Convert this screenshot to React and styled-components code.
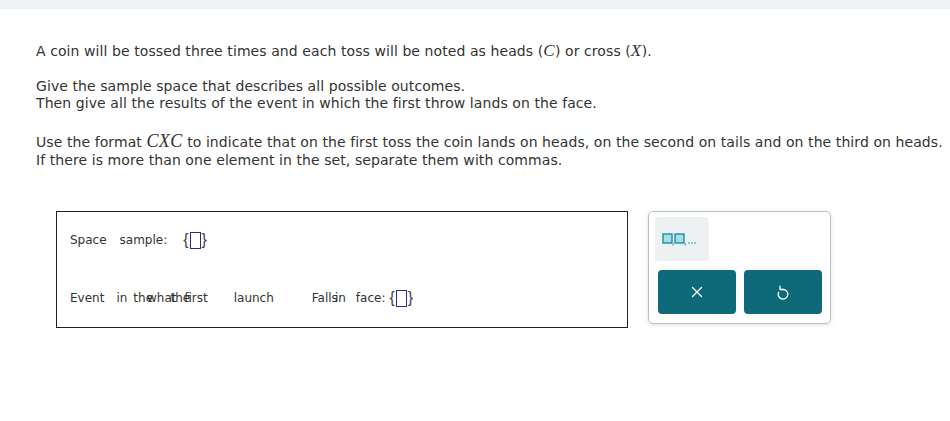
import React from "react";
import styled, { createGlobalStyle } from "styled-components";

const Global = createGlobalStyle`
  body {
    margin: 0;
    background: #fff;
    font-family: "DejaVu Sans", Verdana, sans-serif;
    color: #333;
  }
`;

const TopStrip = styled.div`
  height: 9px;
  background: #eef2f4;
`;

const Content = styled.div`
  padding: 33px 0 0 36px;
`;

const Para = styled.p`
  margin: 0 0 ${(p) => p.$mb || 0}px;
  font-size: 14px;
  letter-spacing: 0.08px;
  line-height: ${(p) => p.$lh || 17}px;
  white-space: nowrap;
`;

const M = styled.span`
  font-family: "Liberation Serif", "Times New Roman", serif;
  font-style: italic;
  font-size: ${(p) => p.$size || 17}px;
  letter-spacing: 0.4px;
`;

const Row = styled.div`
  display: flex;
  align-items: flex-start;
  margin: 42px 0 0 20px;
`;

const AnswerBox = styled.div`
  width: 572px;
  height: 117px;
  border: 1px solid #222;
  padding: 18px 0 0 13px;
  box-sizing: border-box;
  display: flex;
  flex-direction: column;
  gap: 38px;
`;

const Line = styled.div`
  display: flex;
  align-items: center;
  font-size: 12px;
  height: 20px;
  color: #333;
  white-space: nowrap;
`;

const Word = styled.span`
  margin-left: ${(p) => p.$ml || 0}px;
`;

const Brace = styled.span`
  display: inline-flex;
  align-items: center;
  margin-left: ${(p) => p.$ml || 0}px;
  font-family: "Liberation Sans", Arial, sans-serif;
  font-size: 16px;
  color: #444;
`;

const Slot = styled.span`
  display: inline-block;
  width: 9px;
  height: 15px;
  border: 1px solid #2a2a8a;
  margin: 0 1px;
`;

const Panel = styled.div`
  margin-left: 20px;
  width: 183px;
  height: 113px;
  border: 1px solid #b9c0c4;
  border-radius: 5px;
  box-sizing: border-box;
  box-shadow: 0 1px 4px rgba(0, 0, 0, 0.12);
  padding: 5px 6px 0 6px;
`;

const Template = styled.div`
  width: 54px;
  height: 44px;
  background: #eef1f2;
  border-radius: 4px;
  display: flex;
  align-items: center;
  justify-content: center;
`;

const Buttons = styled.div`
  display: flex;
  gap: 8px;
  margin: 9px 0 0 3px;
`;

const ToolButton = styled.button`
  width: 78px;
  height: 44px;
  border: none;
  border-radius: 4px;
  background: #0e6a79;
  color: #fff;
  display: flex;
  align-items: center;
  justify-content: center;
  padding: 0;
`;

const TemplateIcon = () => (
  <svg width="40" height="14" viewBox="0 0 40 14">
    <rect x="1" y="2" width="9" height="9" fill="#a8dde6" stroke="#1d8ea3" strokeWidth="1.4" />
    <path d="M11.5 11.5 L11 13.5" stroke="#1d8ea3" strokeWidth="1" />
    <rect x="13" y="2" width="9" height="9" fill="#a8dde6" stroke="#1d8ea3" strokeWidth="1.4" />
    <path d="M23.5 11.5 L23 13.5" stroke="#1d8ea3" strokeWidth="1" />
    <circle cx="27" cy="11" r="0.8" fill="#1d8ea3" />
    <circle cx="30" cy="11" r="0.8" fill="#1d8ea3" />
    <circle cx="33" cy="11" r="0.8" fill="#1d8ea3" />
  </svg>
);

const XIcon = () => (
  <svg width="12" height="12" viewBox="0 0 12 12">
    <path d="M1.5 1.5 L10.5 10.5 M10.5 1.5 L1.5 10.5" stroke="#fff" strokeWidth="1.4" strokeLinecap="round" />
  </svg>
);

const UndoIcon = () => (
  <svg width="12" height="15" viewBox="0 0 12 15">
    <path
      d="M6 4.5 A4.8 4.8 0 1 1 1.6 7.4"
      fill="none"
      stroke="#fff"
      strokeWidth="1.3"
      strokeLinecap="round"
    />
    <path d="M3 1.2 L3 4.5 L6.4 4.5" fill="none" stroke="#fff" strokeWidth="1.3" strokeLinecap="round" strokeLinejoin="round" />
  </svg>
);

export default function App() {
  return (
    <>
      <Global />
      <TopStrip />
      <Content>
        <Para $mb={18}>
          A coin will be tossed three times and each toss will be noted as heads (<M>C</M>) or cross (<M>X</M>).
        </Para>
        <Para>Give the sample space that describes all possible outcomes.</Para>
        <Para $mb={20}>Then give all the results of the event in which the first throw lands on the face.</Para>
        <Para $lh={19}>
          Use the format <M $size={18}>CXC</M> to indicate that on the first toss the coin lands on heads, on the second on tails and on the third on heads.
        </Para>
        <Para>If there is more than one element in the set, separate them with commas.</Para>
        <Row>
          <AnswerBox>
            <Line>
              <Word>Space</Word>
              <Word $ml={13}>sample:</Word>
              <Brace $ml={16}>{"{"}<Slot />{"}"}</Brace>
            </Line>
            <Line>
              <Word>Event</Word>
              <Word $ml={12}>in</Word>
              <Word $ml={6}>the</Word>
              <Word $ml={-6}>what</Word>
              <Word $ml={-6}>the</Word>
              <Word $ml={-6}>first</Word>
              <Word $ml={26}>launch</Word>
              <Word $ml={38}>Falls</Word>
              <Word $ml={-3}>in</Word>
              <Word $ml={10}>face:</Word>
              <Brace $ml={4}>{"{"}<Slot />{"}"}</Brace>
            </Line>
          </AnswerBox>
          <Panel>
            <Template>
              <TemplateIcon />
            </Template>
            <Buttons>
              <ToolButton aria-label="clear">
                <XIcon />
              </ToolButton>
              <ToolButton aria-label="undo">
                <UndoIcon />
              </ToolButton>
            </Buttons>
          </Panel>
        </Row>
      </Content>
    </>
  );
}
